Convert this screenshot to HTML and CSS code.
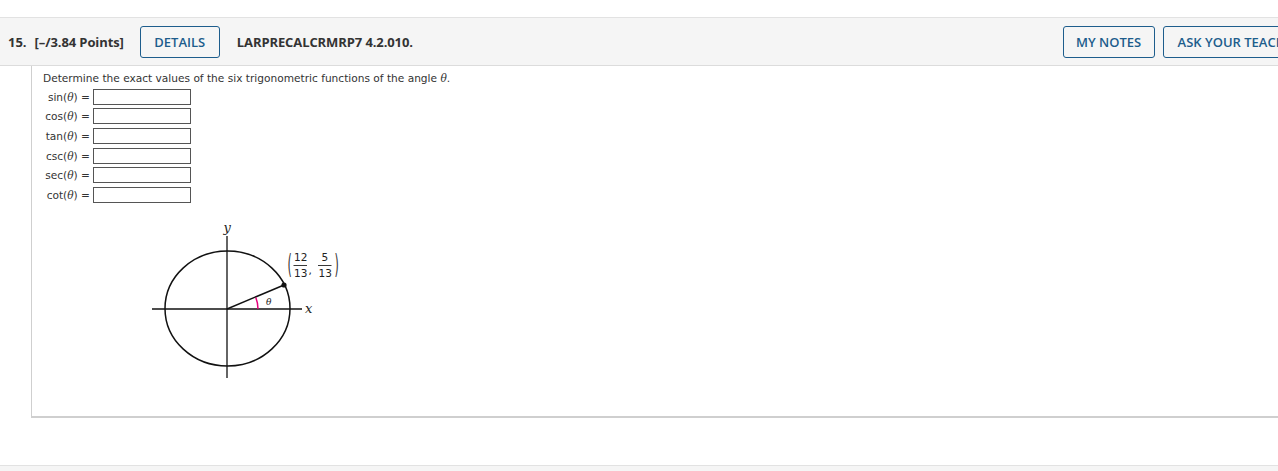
FILE: index.html
```html
<!DOCTYPE html>
<html lang="en">
<head>
<meta charset="utf-8">
<title>Question 15</title>
<link rel="stylesheet" href="styles.css">
</head>
<body>
<div class="page">
  <section class="question">
    <header class="q-head">
      <span class="q-num">15.</span>
      <span class="q-points">[–/3.84 Points]</span>
      <button class="btn btn-details">DETAILS</button>
      <span class="q-code">LARPRECALCRMRP7 4.2.010.</span>
      <div class="q-actions">
        <button class="btn btn-notes">MY NOTES</button>
        <button class="btn btn-ask">ASK YOUR TEACHER</button>
      </div>
    </header>
    <div class="q-body">
      <p class="prompt">Determine the exact values of the six trigonometric functions of the angle <i class="m">θ</i>.</p>
      <div class="answers">
        <span class="lbl">sin(<i class="m">θ</i>) =</span><span class="inp"></span>
        <span class="lbl">cos(<i class="m">θ</i>) =</span><span class="inp"></span>
        <span class="lbl">tan(<i class="m">θ</i>) =</span><span class="inp"></span>
        <span class="lbl">csc(<i class="m">θ</i>) =</span><span class="inp"></span>
        <span class="lbl">sec(<i class="m">θ</i>) =</span><span class="inp"></span>
        <span class="lbl">cot(<i class="m">θ</i>) =</span><span class="inp"></span>
      </div>
      <svg class="figure" width="220" height="175" viewBox="140 212 220 175" xmlns="http://www.w3.org/2000/svg">
        <line x1="227" y1="234" x2="227" y2="376" stroke="#111" stroke-width="1.3"/>
        <line x1="152" y1="307" x2="302" y2="307" stroke="#111" stroke-width="1.3"/>
        <ellipse cx="227.5" cy="306.5" rx="62.5" ry="57.5" fill="none" stroke="#111" stroke-width="1.5"/>
        <line x1="227" y1="307" x2="284" y2="283" stroke="#111" stroke-width="1.5"/>
        <circle cx="284" cy="283" r="2.6" fill="#111"/>
        <path d="M258 307 A31 31 0 0 0 255.8 295.5" fill="none" stroke="#e5007d" stroke-width="1.5"/>
        <text x="223.5" y="230" class="ax">y</text>
        <text x="305" y="311" class="ax">x</text>
        <text x="266" y="303" class="th">θ</text>
        <text class="par" transform="translate(287.5 271) scale(1 2.4)">(</text>
        <text x="294" y="259" class="fr">12</text>
        <line x1="293.5" y1="263.5" x2="307" y2="263.5" stroke="#222" stroke-width="0.9"/>
        <text x="294" y="275" class="fr">13</text>
        <text x="308.5" y="272" class="fr">,</text>
        <text x="321.5" y="259" class="fr">5</text>
        <line x1="318" y1="263.5" x2="331.5" y2="263.5" stroke="#222" stroke-width="0.9"/>
        <text x="318.5" y="275" class="fr">13</text>
        <text class="par" transform="translate(334.5 271) scale(1 2.4)">)</text>
      </svg>
    </div>
  </section>
  <section class="question next">
    <header class="q-head q-head-next"></header>
  </section>
</div>
</body>
</html>
```

FILE: styles.css
```css
html, body {
  margin: 0;
  padding: 0;
  background: #fff;
  overflow: hidden;
}
body {
  width: 1278px;
  height: 471px;
  font-family: "Open Sans", "Liberation Sans", sans-serif;
  color: #333;
}
.page {
  width: 1324px;
  height: 471px;
  padding-top: 17px;
  box-sizing: border-box;
  overflow: hidden;
}
.q-head {
  display: flex;
  align-items: center;
  height: 47px;
  background: #f5f5f5;
  border-top: 1px solid #e2e2e2;
  border-bottom: 1px solid #dcdcdc;
  padding-left: 8px;
  box-sizing: content-box;
  font-size: 13px;
  font-weight: 700;
  color: #333;
}
.q-num { margin-right: 8px; }
.q-points { margin-right: 16px; letter-spacing: -0.1px; }
.q-code { margin-left: 17px; letter-spacing: -0.1px; }
.q-actions {
  margin-left: auto;
  display: flex;
  gap: 8px;
  padding-right: 8px;
}
.btn {
  font-family: "Open Sans", "Liberation Sans", sans-serif;
  font-size: 13px;
  font-weight: 600;
  color: #1d5d8c;
  background: #fff0;
  border: 1px solid #1d5d8c;
  border-radius: 3px;
  height: 32px;
  padding: 0 15px;
  white-space: nowrap;
  line-height: 30px;
  cursor: pointer;
}
.btn-details { width: 80px; padding: 0; }
.btn-notes { width: 92px; padding: 0; }
.btn-ask { padding: 0 14px; }
.q-body {
  margin-left: 31px;
  border-left: 1px solid #cfcfcf;
  border-bottom: 2px solid #cfcfcf;
  height: 350px;
  padding-left: 11px;
  font-family: "DejaVu Sans", Verdana, sans-serif;
  font-size: 10.6px;
  color: #333;
}
.prompt {
  margin: 0;
  padding-top: 5px;
  line-height: 15px;
}
.m {
  font-family: "DejaVu Serif", "Liberation Serif", serif;
  font-style: italic;
}
.answers {
  display: grid;
  grid-template-columns: 49px 98px;
  column-gap: 3px;
  grid-auto-rows: 19.6px;
  align-items: center;
  margin-top: 1px;
  margin-left: -2px;
}
.lbl {
  text-align: right;
  white-space: nowrap;
}
.inp {
  height: 14px;
  border: 1px solid #555;
  background: #fff;
}
.figure {
  display: block;
  margin-left: 97px;
  margin-top: 9px;
}
.ax {
  font-family: "DejaVu Serif", "Liberation Serif", serif;
  font-style: italic;
  font-size: 13px;
  fill: #222;
}
.th {
  font-family: "DejaVu Serif", "Liberation Serif", serif;
  font-style: italic;
  font-size: 9px;
  fill: #222;
}
.fr {
  font-family: "DejaVu Sans", Verdana, sans-serif;
  font-size: 10.5px;
  fill: #222;
}
.par {
  font-family: "DejaVu Sans", sans-serif;
  font-size: 11px;
  fill: #333;
}
.next {
  margin-top: 47px;
}
.q-head-next {
  border-bottom: none;
}
```
